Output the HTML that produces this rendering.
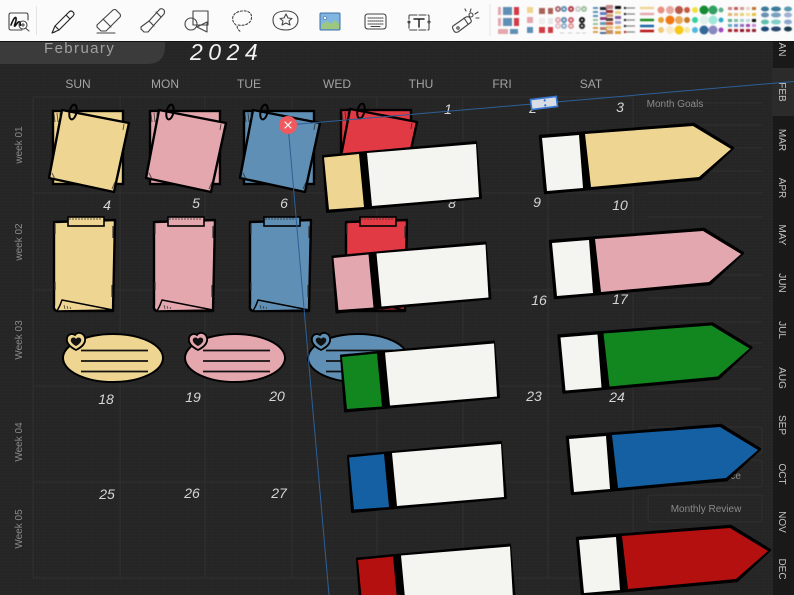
<!DOCTYPE html>
<html><head><meta charset="utf-8"><style>
html,body{margin:0;padding:0;background:#262626}
svg{display:block}
text{font-family:"Liberation Sans",sans-serif}
.d{fill:#a3a3a3;font-size:12px;text-anchor:middle}
.w{fill:#8a8a8a;font-size:10px;text-anchor:middle}
.h{fill:#d6d6d6;font-size:14px;font-style:italic;text-anchor:middle}
.p{fill:#8a8a8a;font-size:10px;text-anchor:middle}
.i{fill:none;stroke:#444;stroke-width:1.1;stroke-linejoin:round;stroke-linecap:round}
</style></head><body>
<svg width="794" height="595" viewBox="0 0 794 595" xmlns="http://www.w3.org/2000/svg">
<defs>
<g id="n1">
<rect x="53" y="111" width="70" height="73" fill="currentColor" stroke="#000" stroke-width="2.400"/>
<path d="M62 110L129 123L114 192L49 178Z" fill="currentColor" stroke="#000" stroke-width="2.400" stroke-linejoin="round"/>
<path d="M54 114l1 8M57 113l1 9M60 113l0 6M52 173l3 6M112 189l3-7M124 124l-1 6" stroke="#222" stroke-width="1" opacity=".7"/>
<ellipse cx="73" cy="112" rx="3.500" ry="7.500" transform="rotate(12 73 112)" fill="none" stroke="#000" stroke-width="2"/>
</g>
<g id="n2">
<path d="M54 222L115 220L113 311L57 311Q53 310 54 305Z" fill="currentColor" stroke="#000" stroke-width="2.400" stroke-linejoin="round"/>
<path d="M62 300L113 310L57 311Q60 306 62 300Z" fill="currentColor" stroke="#000" stroke-width="1.500" stroke-linejoin="round"/>
<path d="M55 224v10M55 282v8M112 285v12M113 226v8M113 232v6" stroke="#333" stroke-width="1.200"/>
<path d="M64 305l1 4M67 306l1 3M70 307l1 2" stroke="#333" stroke-width=".7"/>
<rect x="68" y="217" width="36" height="9" fill="currentColor" stroke="#000" stroke-width="1.600"/>
<path d="M70 218v2M73 218v2M76 218v2M79 218v2M82 218v2M85 218v2M88 218v2M91 218v2M94 218v2M97 218v2M100 218v2" stroke="#333" stroke-width=".8"/>
</g>
<g id="ov">
<ellipse cx="113" cy="358" rx="50" ry="24" fill="currentColor" stroke="#000" stroke-width="2"/>
<path d="M81 350.500h67M81 361h67M81 371.500h67" stroke="#111" stroke-width="1.800"/>
<path d="M76 350C70 347 66 343 67 338C68 334 72 333 75 335C78 331 84 333 85 338C86 343 82 347 76 350Z" fill="currentColor" stroke="#000" stroke-width="1.800"/>
<path d="M76 346C72 344 70 341 71 339C72 337 75 337 76 339C77 337 80 337 81 339C82 341 80 344 76 346Z" fill="#111"/>
</g>
<g id="t1">
<path d="M323 156L476 142L481 198L327 212Z" fill="#000" stroke="#000" stroke-width="2" stroke-linejoin="round"/>
<path d="M367 153L476 144L479 197L372 206Z" fill="#f4f4f0"/>
<path d="M324 157.500L359 154L364 207L329 209.500Z" fill="currentColor"/>
</g>
<g id="t2">
<path d="M540 136L694 124L733 148L700 179L545 193Z" fill="#000" stroke="#000" stroke-width="2.400" stroke-linejoin="round"/>
<path d="M542 138L579 135L583 188L547 191Z" fill="#f4f4f0"/>
<path d="M585 134L693 126L731 149L699 177L591 187Z" fill="currentColor"/>
</g>
<pattern id="tx" width="3" height="3" patternUnits="userSpaceOnUse"><rect width="3" height="3" fill="#262626"/><rect width="1" height="1" fill="#2a2a2a"/><rect x="1.500" y="1.500" width="1" height="1" fill="#232323"/></pattern>
<filter id="bl" x="-2%" y="-10%" width="104%" height="120%"><feGaussianBlur stdDeviation=".5"/></filter>
</defs>

<rect width="794" height="595" fill="url(#tx)"/>

<!-- grid -->
<g stroke="#303030" stroke-width="1" fill="none">
<path d="M33 97V578M120 97V578M205 97V578M292 97V578M377 97V578M463 97V578M548 97V578M633 97V578"/>
<path d="M33 97H633M33 193H633M33 290H633M33 386H633M33 482H633M33 578H633"/>
<path d="M647 103H762M647 125H762M647 148H762M647 171H762M647 193H762M647 217H762M647 275H762M647 298H762M647 322H762M647 343H762M647 367H762M647 389H762"/>
<rect x="648" y="427" width="114" height="27" rx="3"/>
<rect x="648" y="460" width="114" height="27" rx="3"/>
<rect x="648" y="495" width="114" height="27" rx="3"/>
</g>

<!-- header -->
<path d="M0 41H165V46Q165 64 147 64H0Z" fill="#3b3b3b"/>
<text x="44" y="53" fill="#a0a0a0" font-size="15" letter-spacing="1.400">February</text>
<text x="190" y="60" fill="#f2f2f2" font-size="23" font-style="italic" letter-spacing="5.500">2024</text>

<text class="d" x="78" y="88">SUN</text><text class="d" x="165" y="88">MON</text><text class="d" x="249" y="88">TUE</text><text class="d" x="337" y="88">WED</text><text class="d" x="421" y="88">THU</text><text class="d" x="502" y="88">FRI</text><text class="d" x="591" y="88">SAT</text>

<text class="w" transform="translate(22 145) rotate(-90)">week 01</text>
<text class="w" transform="translate(22 242) rotate(-90)">week 02</text>
<text class="w" transform="translate(22 340) rotate(-90)">Week 03</text>
<text class="w" transform="translate(22 442) rotate(-90)">Week 04</text>
<text class="w" transform="translate(22 529) rotate(-90)">Week 05</text>

<text class="p" x="675" y="107">Month Goals</text>
<text class="p" x="741" y="479" style="text-anchor:end">Finance</text>
<text class="p" x="706" y="512">Monthly Review</text>

<!-- handwritten numbers -->
<g>
<text class="h" x="448" y="114">1</text><text class="h" x="533" y="113">2</text><text class="h" x="620" y="112">3</text>
<text class="h" x="107" y="210">4</text><text class="h" x="196" y="208">5</text><text class="h" x="284" y="208">6</text><text class="h" x="452" y="208" font-size="10">8</text><text class="h" x="537" y="207">9</text><text class="h" x="620" y="210">10</text>
<text class="h" x="539" y="305">16</text><text class="h" x="620" y="304">17</text>
<text class="h" x="106" y="404">18</text><text class="h" x="193" y="402">19</text><text class="h" x="277" y="401">20</text><text class="h" x="534" y="401">23</text><text class="h" x="617" y="402">24</text>
<text class="h" x="107" y="499">25</text><text class="h" x="192" y="498">26</text><text class="h" x="279" y="498">27</text>
</g>

<!-- right tabs -->
<rect x="773" y="41" width="21" height="554" fill="#191919"/>
<rect x="772" y="68" width="22" height="48" fill="#2b2b2b"/>
<g fill="#c4c4c4" font-size="10" text-anchor="middle">
<text transform="translate(779 47) rotate(90)">JAN</text>
<text transform="translate(779 92) rotate(90)">FEB</text>
<text transform="translate(779 140) rotate(90)">MAR</text>
<text transform="translate(779 188) rotate(90)">APR</text>
<text transform="translate(779 235) rotate(90)">MAY</text>
<text transform="translate(779 283) rotate(90)">JUN</text>
<text transform="translate(779 330) rotate(90)">JUL</text>
<text transform="translate(779 378) rotate(90)">AUG</text>
<text transform="translate(779 425) rotate(90)">SEP</text>
<text transform="translate(779 474) rotate(90)">OCT</text>
<text transform="translate(779 522) rotate(90)">NOV</text>
<text transform="translate(779 569) rotate(90)">DEC</text>
</g>

<!-- sticky notes -->
<use href="#n1" color="#efd592"/>
<use href="#n1" color="#e4a7ad" transform="translate(97 0)"/>
<use href="#n1" color="#5f8fb4" transform="translate(191 0)"/>
<use href="#n1" color="#e13a44" transform="translate(288 -1)"/>
<use href="#n2" color="#efd592"/>
<use href="#n2" color="#e4a7ad" transform="translate(100 0)"/>
<use href="#n2" color="#5f8fb4" transform="translate(196 0)"/>
<use href="#n2" color="#e13a44" transform="translate(292 0)"/>
<use href="#ov" color="#efd592"/>
<use href="#ov" color="#e4a7ad" transform="translate(122 0)"/>
<use href="#ov" color="#5f8fb4" transform="translate(245 0)"/>

<!-- tags -->
<use href="#t1" color="#efd592"/>
<use href="#t1" color="#e3a8af" transform="translate(9.500 100.500)"/>
<use href="#t1" color="#12871f" transform="translate(18 199.500)"/>
<use href="#t1" color="#1460a3" transform="translate(25 300)"/>
<use href="#t1" color="#b51010" transform="translate(34 402.500)"/>
<use href="#t2" color="#efd592"/>
<use href="#t2" color="#e3a8af" transform="translate(10 105)"/>
<use href="#t2" color="#12871f" transform="translate(18.500 199.500)"/>
<use href="#t2" color="#1460a3" transform="translate(27 301)"/>
<use href="#t2" color="#b51010" transform="translate(37 402)"/>

<!-- selection -->
<path d="M288 125L794 81.500M288 125L329 595" stroke="#2d5f97" stroke-width="1" fill="none"/>
<g transform="rotate(-7 544 103)">
<rect x="531" y="98" width="26" height="10" fill="#d9dde6" stroke="#3a78d0" stroke-width="1.600"/>
<circle cx="545" cy="100.500" r="1.100" fill="#2f6fc8"/><circle cx="545" cy="105.500" r="1.100" fill="#2f6fc8"/>
</g>
<circle cx="288" cy="125" r="9" fill="#f0595d"/>
<path d="M285 122l6 6M291 122l-6 6" stroke="#fff" stroke-width="1.200" stroke-linecap="round"/>

<!-- toolbar -->
<rect width="794" height="41" fill="#fbfbfb"/>
<rect y="41" width="794" height="1" fill="#111"/>
<path d="M36.500 6V35M490 4V36" stroke="#e4e4e4"/>
<g class="i">
<path d="M22 30H11Q9 30 9 28V15Q9 13 11 13H26Q28 13 28 15V20"/>
<path d="M11 25C13 20 15 16 16 18C17 21 13 27 15 26C17 24 18 21 20 22C21 23 19 26 21 25" stroke="#111" stroke-width="1.600"/>
<circle cx="23" cy="25" r="4"/><path d="M26 28.500L29 31M21.500 25H24.500M23 23.500V26.500"/>
<path d="M52 33L55 26L69 12Q71 10 73 12Q75 14 73 16L59 30Z M55 26L59 30M66 15L70 19M52 33L55 32" stroke="#222"/>
<path d="M97 25L113 10Q115 9 116 10L120 14Q121 16 120 17L106 31H101L97 27ZM103 19L111 27M97 33H115"/>
<path d="M141 27L149 21L160 9Q162 8 164 10Q165 12 164 14L154 25L148 32H144L141 29ZM149 21L154 26M156 12L161 17"/>
<rect x="193" y="11" width="15" height="14"/><circle cx="191" cy="24" r="6"/><path d="M207 22V32L197 27Z"/>
<path d="M236 25C230 20 232 12 242 11C250 10 253 15 251 20C249 25 242 26 238 25C236 27 238 30 241 32" stroke-dasharray="2 1.800"/>
<path d="M286 30C277 30 273 26 273 20C273 14 278 11 286 11C294 11 298 15 298 20C298 25 294 30 286 30Z"/>
<path d="M286 14L288 18L292 18.500L289 21L290 25L286 23L282 25L283 21L280 18.500L284 18Z"/>
<path d="M365 17Q365 14 368 14H383Q386 14 386 17V26Q386 29 383 29H368Q365 29 365 26Z"/>
<path d="M368 18H383M368 21H383M368 24H383" stroke-dasharray="1 1"/><path d="M371 26.500H380"/>
<path d="M410 15H428Q429 15 429 16V29Q429 30 428 30H410Q409 30 409 29V16Q409 15 410 15Z" stroke-dasharray="7 2"/>
<path d="M414 19H424M419 19V27" stroke-width="1.500" stroke="#222"/>
<circle cx="409" cy="22" r="1"/><circle cx="429" cy="22" r="1"/>
<path d="M453 26L466 17Q469 16 470 18L471 20Q472 22 470 23L458 32Q455 33 454 31L453 29Q452 27 453 26ZM464 18L468 24"/>
<circle cx="458" cy="28" r="1.200"/>
<path d="M470 12L471 9M475 14L478 12M476 18H479M466 11L465 9"/><circle cx="471" cy="15" r="2"/>
</g>
<rect x="320" y="13" width="20" height="17" rx="1" fill="#7fb5e0" stroke="#3f6f9f"/>
<path d="M321 29V25L327 21L331 24L335 20L339 24V29Z" fill="#9dc77f"/>
<circle cx="325" cy="18" r="1.500" fill="#fff" stroke="#3f6f9f" stroke-width=".6"/>

<!-- sticker palette thumbnails -->
<g filter="url(#bl)">
<rect x="498" y="7" width="3" height="8" fill="#e4a7ad"/><rect x="503" y="7" width="9" height="8" fill="#5f8fb4"/><rect x="514" y="7" width="5" height="8" fill="#d23a44"/>
<rect x="498" y="18" width="3" height="8" fill="#e4a7ad"/><rect x="503" y="18" width="9" height="8" fill="#5f8fb4"/><rect x="514" y="18" width="5" height="8" fill="#d23a44"/>
<rect x="498" y="29" width="10" height="5" fill="#e4a7ad"/><rect x="510" y="29" width="8" height="5" fill="#5f8fb4"/>
<rect x="527" y="7" width="6" height="6" fill="#efd592"/><rect x="527" y="17" width="6" height="6" fill="#e4a7ad"/><rect x="527" y="27" width="6" height="6" fill="#5f8fb4"/>
<rect x="539" y="8" width="6" height="6" fill="#a8625a"/><rect x="548" y="8" width="5" height="6" fill="#a8625a"/>
<rect x="539" y="18" width="6" height="6" fill="#eee"/><rect x="548" y="18" width="5" height="6" fill="#e8e8e8"/>
<rect x="539" y="27" width="6" height="6" fill="#d03a44"/><rect x="548" y="27" width="5" height="6" fill="#d03a44"/>
<g fill="none" stroke-width="2">
<circle cx="558" cy="9" r="2" stroke="#a86a70"/><circle cx="564" cy="9" r="2" stroke="#5f8fb4"/><circle cx="571" cy="9" r="2" stroke="#b03a48"/><circle cx="578" cy="9" r="2" stroke="#ccc"/><circle cx="584" cy="9" r="2" stroke="#9cc09c"/>
<circle cx="558" cy="20" r="2" stroke="#e4a7ad"/><circle cx="564" cy="20" r="2" stroke="#5f8fb4"/><circle cx="571" cy="20" r="2" stroke="#d06070"/><circle cx="582" cy="20" r="2" stroke="#111"/>
<circle cx="558" cy="26" r="2" stroke="#e4c0c8"/><circle cx="564" cy="26" r="2" stroke="#8fb0cc"/><circle cx="571" cy="26" r="2" stroke="#e09aa0"/><circle cx="582" cy="26" r="2" stroke="#222"/>
</g>
<path d="M560 33h4M568 33h4M576 33h4M582 33h4" stroke="#ccc"/>
<g stroke-width="2"><path d="M593 8h5M593 12h5M593 16h5" stroke="#5f8fb4"/><path d="M593 20h5M593 24h5" stroke="#9cc09c"/><path d="M593 28h5M593 32h5" stroke="#d8a050"/></g>
<rect x="600" y="7" width="7" height="3" fill="#223"/><rect x="600" y="12" width="7" height="3" fill="#5f7fc4"/><rect x="600" y="17" width="7" height="3" fill="#8a3a7a"/><rect x="600" y="22" width="7" height="3" fill="#6a9ab0"/><rect x="600" y="27" width="7" height="3" fill="#b88060"/><rect x="600" y="32" width="7" height="2" fill="#4a6a90"/>
<rect x="606" y="5" width="7" height="4" fill="#c08888"/><rect x="606" y="10" width="7" height="3" fill="#a03030"/><rect x="606" y="14" width="7" height="3" fill="#d09a70"/><rect x="606" y="18" width="7" height="3" fill="#5a3a3a"/><rect x="606" y="22" width="7" height="3" fill="#c86040"/><rect x="606" y="26" width="7" height="3" fill="#e8c080"/><rect x="606" y="30" width="7" height="4" fill="#c89060"/>
<rect x="615" y="6" width="6" height="3" fill="#111"/><rect x="615" y="11" width="6" height="3" fill="#e8d080"/><rect x="615" y="16" width="6" height="3" fill="#7a5aa0"/><rect x="615" y="21" width="6" height="3" fill="#a0a0d0"/><rect x="615" y="26" width="6" height="3" fill="#e8c070"/><rect x="615" y="31" width="6" height="3" fill="#e0a040"/>
<g stroke-width="1.200" stroke="#888"><path d="M626 8h9M626 14h9M626 20h9M626 26h9M626 32h9"/></g>
<path d="M625 7v2M625 13v2M625 19v2M625 25v2" stroke="#111" stroke-width="2"/><path d="M625 31v2" stroke="#b51010" stroke-width="2"/>
<g stroke-width="2.400"><path d="M640 8h14" stroke="#efd592"/><path d="M640 14h14" stroke="#e4a7ad"/><path d="M640 20h14" stroke="#12871f"/><path d="M640 26h14" stroke="#1460a3"/><path d="M640 31h14" stroke="#b51010"/></g>
<circle cx="661" cy="10" r="3.500" fill="#e89080"/><circle cx="670" cy="10" r="4" fill="#e8a8a0"/><circle cx="679" cy="10" r="4" fill="#b8584a"/><circle cx="687" cy="10" r="3" fill="#c85a40"/>
<circle cx="661" cy="20" r="3" fill="#e8a030"/><circle cx="670" cy="20" r="4.500" fill="#f07818"/><circle cx="679" cy="20" r="4" fill="#e8a858"/><circle cx="687" cy="20" r="3" fill="#c87828"/>
<circle cx="661" cy="30" r="3" fill="#f0c878"/><circle cx="670" cy="30" r="4" fill="#f8e8c8"/><circle cx="679" cy="30" r="4.500" fill="#f8c818"/><circle cx="687" cy="30" r="3" fill="#f8e8a0"/>
<circle cx="695" cy="10" r="3" fill="#f0e040"/><circle cx="704" cy="10" r="4.500" fill="#128a30"/><circle cx="713" cy="10" r="4.500" fill="#30a060"/><circle cx="721" cy="10" r="2.500" fill="#60b090"/>
<circle cx="695" cy="20" r="3" fill="#30d0a0"/><circle cx="704" cy="20" r="4.500" fill="#e0f0ec"/><circle cx="713" cy="20" r="4.500" fill="#a0e8d8"/><circle cx="721" cy="20" r="2.500" fill="#30a8c8"/>
<circle cx="695" cy="30" r="3" fill="#50b8e0"/><circle cx="704" cy="30" r="4.500" fill="#306898"/><circle cx="713" cy="30" r="4.500" fill="#8a88c0"/><circle cx="721" cy="30" r="2.500" fill="#a048c0"/>
<g>
<rect x="728" y="7" width="4" height="3" fill="#d08080"/><rect x="734" y="7" width="4" height="3" fill="#c06060"/><rect x="740" y="7" width="4" height="3" fill="#d09a90"/><rect x="746" y="7" width="4" height="3" fill="#e8d0c8"/><rect x="752" y="7" width="4" height="3" fill="#c07030"/>
<rect x="728" y="13" width="4" height="3" fill="#e0b070"/><rect x="734" y="13" width="4" height="3" fill="#e8c080"/><rect x="740" y="13" width="4" height="3" fill="#e8d080"/><rect x="746" y="13" width="4" height="3" fill="#f0e090"/><rect x="752" y="13" width="4" height="3" fill="#e8c040"/>
<rect x="728" y="19" width="4" height="3" fill="#60b090"/><rect x="734" y="19" width="4" height="3" fill="#80c0a0"/><rect x="740" y="19" width="4" height="3" fill="#a0d0d0"/><rect x="746" y="19" width="4" height="3" fill="#c0d8e0"/><rect x="752" y="19" width="4" height="3" fill="#111"/>
<rect x="728" y="24" width="4" height="3" fill="#60b0c0"/><rect x="734" y="24" width="4" height="3" fill="#7090d0"/><rect x="740" y="24" width="4" height="3" fill="#9070c0"/><rect x="746" y="24" width="4" height="3" fill="#a050b0"/><rect x="752" y="24" width="4" height="3" fill="#c090d0"/>
<rect x="728" y="29" width="4" height="3" fill="#a02030"/><rect x="734" y="29" width="4" height="3" fill="#b02030"/><rect x="740" y="29" width="4" height="3" fill="#901828"/><rect x="746" y="29" width="4" height="3" fill="#a02838"/><rect x="752" y="29" width="4" height="3" fill="#902030"/>
</g>
<g>
<ellipse cx="765" cy="9" rx="4" ry="2.500" fill="#3a7a9a"/><ellipse cx="776" cy="9" rx="5" ry="2.500" fill="#3a7a9a"/><ellipse cx="788" cy="9" rx="4" ry="2.500" fill="#5a9ab0"/>
<ellipse cx="765" cy="15" rx="4" ry="2.500" fill="#6a90b0"/><ellipse cx="776" cy="15" rx="5" ry="2.500" fill="#7aa0c0"/><ellipse cx="788" cy="15" rx="4" ry="2.500" fill="#a0b0d0"/>
<ellipse cx="765" cy="22" rx="4" ry="2.500" fill="#60c0b0"/><ellipse cx="776" cy="22" rx="5" ry="2.500" fill="#80d0c8"/><ellipse cx="788" cy="22" rx="4" ry="2.500" fill="#90a8d0"/>
<ellipse cx="765" cy="29" rx="4" ry="2.500" fill="#1a4a7a"/><ellipse cx="776" cy="29" rx="5" ry="2.500" fill="#2a4a70"/><ellipse cx="788" cy="29" rx="4" ry="2.500" fill="#1a3a50"/>
</g>
</g>
</svg>
</body></html>
